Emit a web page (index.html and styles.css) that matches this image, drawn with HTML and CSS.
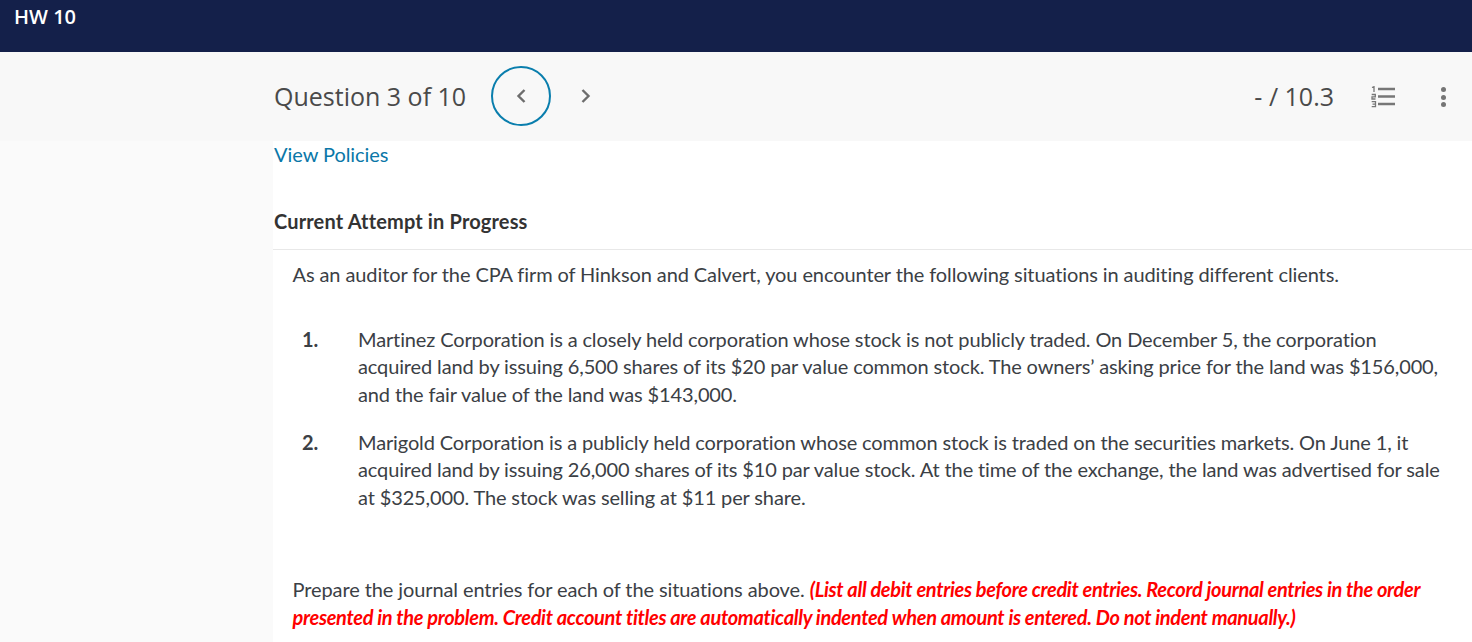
FILE: index.html
```html
<!DOCTYPE html>
<html lang="en">
<head>
    <meta charset="UTF-8">
    <meta name="viewport" content="width=device-width, initial-scale=1.0">
    <title>HW 10</title>
    <link rel="stylesheet" href="styles.css">
</head>
<body>
    <header class="top-bar">
        <h1 class="top-title">HW 10</h1>
    </header>

    <div class="question-bar">
        <div class="question-nav">
            <span class="question-count">Question 3 of 10</span>
            <button class="nav-btn nav-btn-active" title="Previous">
                <svg width="12" height="16" viewBox="0 0 12 16"><path d="M9.500 2 L3.500 8 L9.500 14" fill="none" stroke="#6d6d6d" stroke-width="2.400"/></svg>
            </button>
            <button class="nav-btn" title="Next">
                <svg width="12" height="16" viewBox="0 0 12 16"><path d="M2.500 2 L8.500 8 L2.500 14" fill="none" stroke="#6d6d6d" stroke-width="2.400"/></svg>
            </button>
        </div>
        <div class="question-tools">
            <span class="question-score">- / 10.3</span>
            <svg class="list-icon" width="25" height="22" viewBox="0 0 25 22">
                <path d="M7 3 H24 M7 10.500 H24 M7 18 H24" fill="none" stroke="#777" stroke-width="2.400"/>
                <path d="M1 1.500 L3 .7 V6 M.7 8.500 H4.300 V10.800 H1 V13 H4.500 M.7 15.700 H4.500 V20.700 H.7 M1.500 18.200 H4.500" fill="none" stroke="#777" stroke-width="1.300"/>
            </svg>
            <div class="more-icon">
                <span class="dot"></span>
                <span class="dot"></span>
                <span class="dot"></span>
            </div>
        </div>
    </div>

    <div class="page">
        <main class="content">
            <a class="policies-link" href="#">View Policies</a>
            <h2 class="attempt-title">Current Attempt in Progress</h2>
            <div class="question-body">
                <p class="intro">As an auditor for the CPA firm of Hinkson and Calvert, you encounter the following situations in auditing different clients.</p>
                <ol class="situations">
                    <li class="situation">
                        <span class="situation-num">1.</span>
                        <p class="situation-text">Martinez Corporation is a closely held corporation whose stock is not publicly traded. On December 5, the corporation acquired land by issuing 6,500 shares of its $20 par value common stock. The owners’ asking price for the land was $156,000, and the fair value of the land was $143,000.</p>
                    </li>
                    <li class="situation">
                        <span class="situation-num">2.</span>
                        <p class="situation-text">Marigold Corporation is a publicly held corporation whose common stock is traded on the securities markets. On June 1, it acquired land by issuing 26,000 shares of its $10 par value stock. At the time of the exchange, the land was advertised for sale at $325,000. The stock was selling at $11 per share.</p>
                    </li>
                </ol>
                <p class="instructions">Prepare the journal entries for each of the situations above. <em class="warning">(List all debit entries before credit entries. Record journal entries in the order presented in the problem. Credit account titles are automatically indented when amount is entered. Do not indent manually.)</em></p>
            </div>
        </main>
    </div>
</body>
</html>
```

FILE: styles.css
```css
* {
    margin: 0;
    padding: 0;
    box-sizing: border-box;
}

html, body {
    height: 100%;
    overflow: hidden;
}

body {
    font-family: 'Lato', 'Liberation Sans', sans-serif;
    background: #fafafa;
    color: #3b4045;
}

.top-bar {
    background: #14204a;
    height: 52px;
    padding: 5px 14px 0;
}

.top-title {
    color: white;
    font-family: 'Open Sans', sans-serif;
    font-size: 20px;
    font-weight: 600;
    line-height: 24px;
}

.question-bar {
    background: #f8f8f8;
    height: 89px;
    padding: 0 26px 0 274px;
    display: flex;
    justify-content: space-between;
    align-items: center;
}

.question-nav {
    display: flex;
    align-items: center;
    margin-top: -1px;
}

.question-count {
    font-family: 'Open Sans', sans-serif;
    font-size: 25px;
    color: #4a4a4a;
    margin-right: 25px;
}

.nav-btn {
    width: 60px;
    height: 60px;
    border: 2px solid transparent;
    border-radius: 50%;
    background: none;
    display: flex;
    align-items: center;
    justify-content: center;
    margin-right: 5px;
    cursor: pointer;
}

.nav-btn-active {
    border-color: #0a7ead;
}

.question-tools {
    display: flex;
    align-items: center;
    margin-top: -1px;
}

.question-score {
    font-family: 'Open Sans', sans-serif;
    font-size: 25px;
    color: #4a4a4a;
    margin-right: 37px;
}

.list-icon {
    margin-top: 2px;
    margin-right: 45px;
}

.more-icon {
    display: flex;
    flex-direction: column;
    gap: 2.500px;
    margin-top: 2px;
}

.dot {
    width: 5px;
    height: 5px;
    border-radius: 50%;
    background: #757575;
}

.page {
    padding-left: 273px;
}

.content {
    background: white;
    height: 501px;
}

.policies-link {
    display: block;
    font-size: 20px;
    line-height: 26px;
    letter-spacing: -0.05px;
    color: #0a77a8;
    text-decoration: none;
    padding-left: 1px;
}

.attempt-title {
    font-size: 20px;
    font-weight: 700;
    line-height: 28px;
    letter-spacing: 0.15px;
    color: #333;
    padding: 40px 0 14px 1px;
    border-bottom: 1px solid #e8e8e8;
}

.question-body {
    padding: 11px 20px 0 19.500px;
    font-size: 20px;
    line-height: 27.500px;
    letter-spacing: -0.1px;
}

.situations {
    list-style: none;
    margin-top: 37px;
}

.situation {
    display: flex;
    margin-bottom: 20.500px;
}

.situation-num {
    flex: 0 0 65.500px;
    padding-left: 9.500px;
    font-weight: 700;
}

.situation-text {
    letter-spacing: -0.13px;
}

.instructions {
    margin-top: 65px;
}

.warning {
    color: #f00;
    font-weight: 700;
    font-style: italic;
    letter-spacing: -0.32px;
}
```
